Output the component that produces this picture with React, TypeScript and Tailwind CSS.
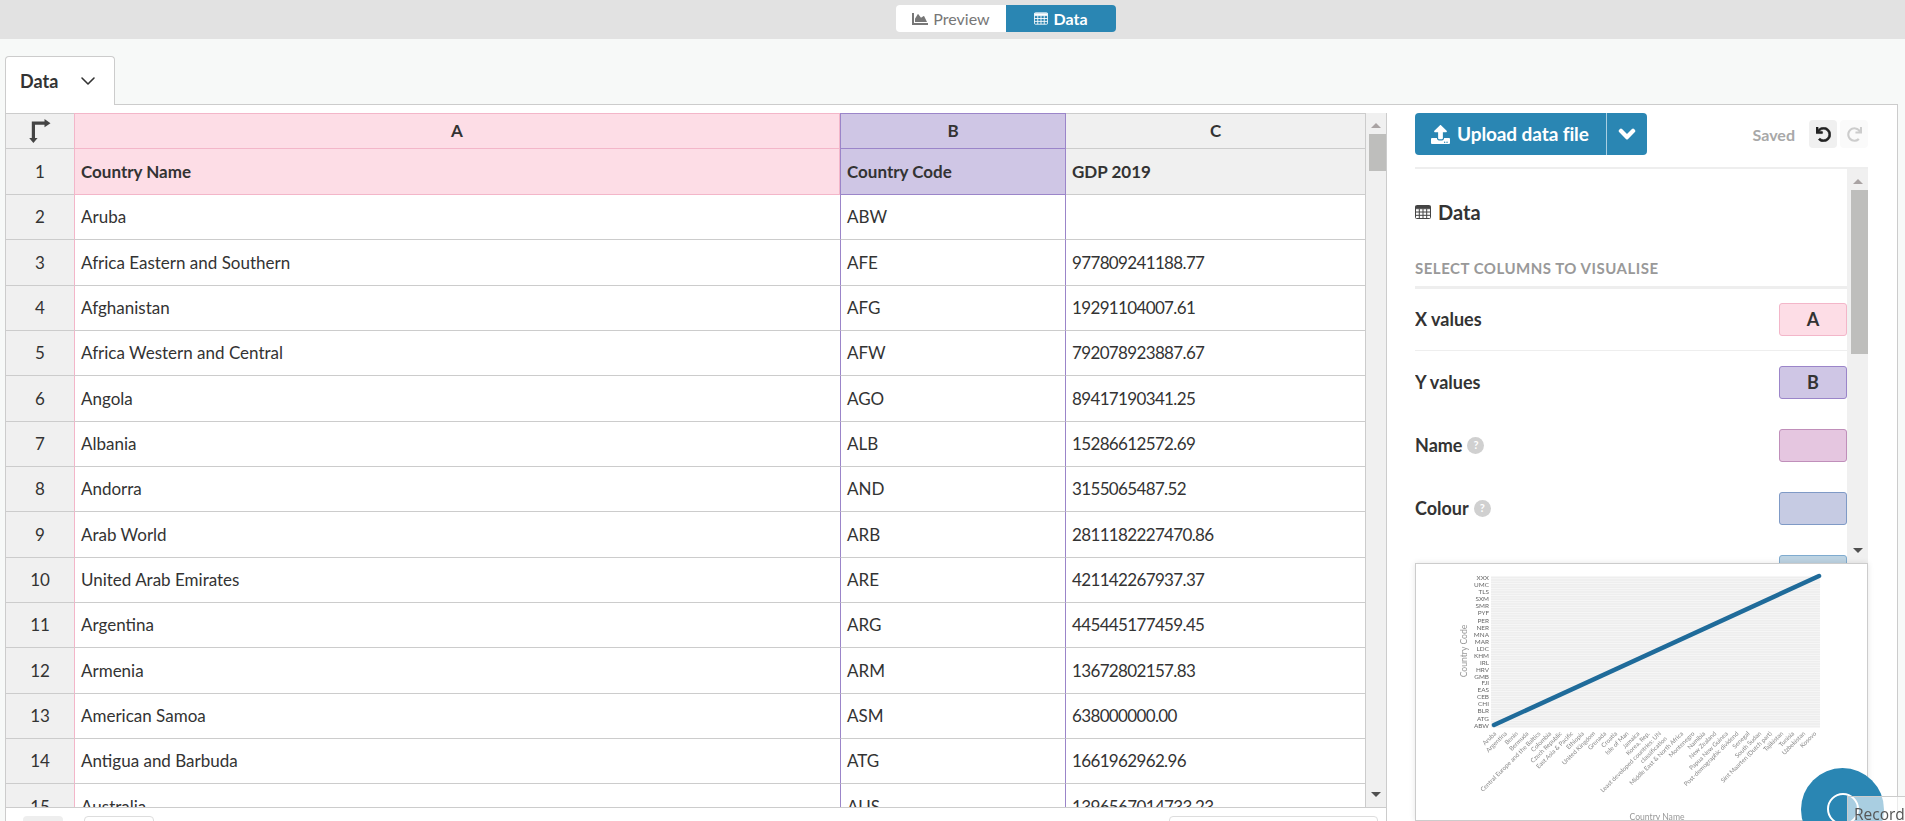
import { FaChartArea, FaChevronDown, FaRedo, FaUndo, FaUpload } from "react-icons/fa";
import { ChevronDown } from "lucide-react";

const rows = [
    ["Aruba", "ABW", ""],
    ["Africa Eastern and Southern", "AFE", "977809241188.77"],
    ["Afghanistan", "AFG", "19291104007.61"],
    ["Africa Western and Central", "AFW", "792078923887.67"],
    ["Angola", "AGO", "89417190341.25"],
    ["Albania", "ALB", "15286612572.69"],
    ["Andorra", "AND", "3155065487.52"],
    ["Arab World", "ARB", "2811182227470.86"],
    ["United Arab Emirates", "ARE", "421142267937.37"],
    ["Argentina", "ARG", "445445177459.45"],
    ["Armenia", "ARM", "13672802157.83"],
    ["American Samoa", "ASM", "638000000.00"],
    ["Antigua and Barbuda", "ATG", "1661962962.96"],
    ["Australia", "AUS", "1396567014733.23"],
];

const yLabels: [string, number][] = [
    ["XXX", 53], ["UMC", 74], ["TLS", 95], ["SXM", 117], ["SMR", 137], ["PYF", 158],
    ["PER", 182], ["NER", 203], ["MNA", 224], ["MAR", 245], ["LDC", 266], ["KHM", 287],
    ["IRL", 308], ["HRV", 329], ["GMB", 350], ["FJI", 369], ["EAS", 389], ["CEB", 410],
    ["CHI", 431], ["BLR", 452], ["ATG", 476], ["ABW", 497],
];

const xLabels: [string, number, number?][] = [
    ["Aruba", 290], ["Argentina", 322], ["Benin", 355], ["Bermuda", 387],
    ["Central Europe and the Baltics", 423], ["Colombia", 455], ["Czech Republic", 487],
    ["East Asia & Pacific", 521], ["Ethiopia", 553], ["United Kingdom", 587], ["Grenada", 620],
    ["Croatia", 653], ["Isle of Man", 687], ["Jamaica", 720], ["Korea, Rep.", 751],
    ["Least developed countries: UN", 785], ["classification", 802, 5],
    ["Middle East & North Africa", 851], ["Montenegro", 885], ["Namibia", 917],
    ["New Zealand", 950], ["Papua New Guinea", 985], ["Post-demographic dividend", 1017],
    ["Senegal", 1050], ["South Sudan", 1085], ["Sint Maarten (Dutch part)", 1117],
    ["Tajikistan", 1151], ["Tunisia", 1184], ["Uzbekistan", 1217], ["Kosovo", 1250],
];

function TableIcon({ className }: { className?: string }) {
    return (
        <svg viewBox="0 0 16 14" className={className} fill="none" stroke="currentColor" strokeWidth="1">
            <rect x="0.5" y="0.5" width="15" height="13" rx="1" />
            <path d="M0.5 3.7H15.5M0.5 7H15.5M0.5 10.3H15.5M4.3 3.7V13.5M8 3.7V13.5M11.7 3.7V13.5" />
            <path d="M0.5 2.1H15.5" strokeWidth="2.4" />
        </svg>
    );
}

function SwapIcon() {
    return (
        <svg viewBox="0 0 22 24" className="w-[22px] h-[24px] text-[#444]" fill="currentColor">
            <path d="M2.8 19V2.6H15.5V0L21.5 4.2 15.5 8.2V5.8H6V19H8.6L4.4 24 0.2 19Z" />
        </svg>
    );
}

function Scrollbar({ thumbHeight, className }: { thumbHeight: string; className: string }) {
    return (
        <div className={`flex flex-col items-end bg-[#f0f0f0] overflow-hidden ${className}`}>
            <div className="h-[21px] w-full flex justify-center items-center pt-[3px]">
                <div className="w-0 h-0 border-x-[5px] border-x-transparent border-b-[5px] border-b-[#a9a3a3]" />
            </div>
            <div className={`w-[17px] bg-[#bebebc] ${thumbHeight}`} />
            <div className="flex-1" />
            <div className="h-[20px] w-full flex justify-center items-start pt-[5px]">
                <div className="w-0 h-0 border-x-[5px] border-x-transparent border-t-[5px] border-t-[#505050]" />
            </div>
        </div>
    );
}

function DataTable() {
    const base = "flex items-center px-[6px] border-b border-[#ccc] truncate";
    return (
        <div className="flex-1 grid grid-cols-[68px_766px_226px_300px] content-start text-[#333] text-[17px] overflow-hidden">
            <div className="h-[36px] flex items-center justify-center bg-[#f0f0f0] border-y border-[#ccc]">
                <SwapIcon />
            </div>
            <div className="h-[36px] flex items-center justify-center bg-[#fddde6] border border-[#f3b6c9] font-bold">A</div>
            <div className="h-[36px] flex items-center justify-center bg-[#cfc6e5] border border-[#9b85c9] font-bold">B</div>
            <div className="h-[36px] flex items-center justify-center bg-[#f0f0f0] border-y border-r border-[#ccc] font-bold">C</div>

            <div className="h-[46px] flex items-center justify-center bg-[#f0f0f0] border-b border-[#ccc]">1</div>
            <div className="h-[46px] flex items-center px-[6px] bg-[#fddde6] border-x border-b border-[#f3b6c9] font-bold">Country Name</div>
            <div className="h-[46px] flex items-center px-[6px] bg-[#cfc6e5] border-x border-b border-[#9b85c9] font-bold">Country Code</div>
            <div className="h-[46px] flex items-center px-[6px] bg-[#f0f0f0] border-r border-b border-[#ccc] font-bold">GDP 2019</div>

            {rows.map((row, i) => (
                <div key={row[1]} className="contents">
                    <div className="h-[45.33px] flex items-center justify-center bg-[#f0f0f0] border-b border-[#ccc]">{i + 2}</div>
                    <div className={`h-[45.33px] border-l border-l-[#f3b6c9] ${base}`}>{row[0]}</div>
                    <div className={`h-[45.33px] border-x border-x-[#9b85c9] ${base}`}>{row[1]}</div>
                    <div className={`h-[45.33px] border-r tracking-[-0.65px] ${base}`}>{row[2]}</div>
                </div>
            ))}
        </div>
    );
}

function ColumnRow({ label, help, letter, box, height }: { label: string; help?: boolean; letter?: string; box: string; height: string }) {
    return (
        <div className={`flex items-center justify-between ${height}`}>
            <div className="flex items-center gap-[5px] text-[18px] font-bold text-[#333]">
                {label}
                {help && (
                    <span className="w-[17px] h-[17px] rounded-full bg-[#d0d0d0] text-white text-[11px] flex items-center justify-center">?</span>
                )}
            </div>
            <div className={`w-[68px] h-[33px] rounded-[3px] border flex items-center justify-center text-[18px] font-bold text-[#333] ${box}`}>
                {letter}
            </div>
        </div>
    );
}

function Chart() {
    return (
        <svg viewBox="0 0 451 257" className="w-[451px] h-[257px] font-['Lato',sans-serif] blur-[0.3px]">
            <defs>
                <pattern id="stripes" width="4" height="2.4" patternUnits="userSpaceOnUse">
                    <rect width="4" height="2.4" fill="#eeeeee" />
                    <rect width="4" height="0.6" fill="#fafafa" />
                </pattern>
            </defs>
            <rect x="75" y="12" width="329" height="152" fill="url(#stripes)" />
            <line x1="78" y1="161" x2="403" y2="12" stroke="#1f6b9a" strokeWidth="4.5" strokeLinecap="round" />
            {yLabels.map(([t, y]) => (
                <text key={t} x="73" y={y / 3 - 2} textAnchor="end" fontSize="6.4" fill="#666">{t}</text>
            ))}
            <text transform="translate(51 87) rotate(-90)" textAnchor="middle" fontSize="8.6" fill="#999">Country Code</text>
            {xLabels.map(([t, x, dy]) => (
                <text key={t} transform={`translate(${x / 3 - 16} ${170 + (dy ?? 0)}) rotate(-45)`} textAnchor="end" fontSize="6.2" fill="#888">{t}</text>
            ))}
            <text x="241" y="256" textAnchor="middle" fontSize="8.6" fill="#999">Country Name</text>
        </svg>
    );
}

export default function App() {
    return (
        <div className="h-screen overflow-hidden flex flex-col bg-[#f7f9f8] font-['Lato','Noto_Sans',sans-serif] text-[#333]">
            {/* top bar */}
            <div className="h-[39px] shrink-0 bg-[#e2e2e2] flex justify-center pt-[5px] pl-[107px]">
                <div className="flex h-[27px] rounded-[4px] overflow-hidden text-[16px]">
                    <button className="w-[110px] bg-white text-[#777] flex items-center justify-center gap-[5px]">
                        <FaChartArea size={16} />
                        Preview
                    </button>
                    <button className="w-[110px] bg-[#2a86b3] text-white font-bold flex items-center justify-center gap-[5px]">
                        <TableIcon className="w-[14px] h-[13px]" />
                        Data
                    </button>
                </div>
            </div>

            {/* tabs */}
            <div className="h-[65px] shrink-0 pt-[17px] pl-[5px]">
                <div className="relative z-10 w-[110px] h-[49px] bg-white border border-b-0 border-[#ccc] rounded-t-[4px] flex items-center pl-[14px] gap-[18px] text-[18px] font-bold">
                    Data
                    <ChevronDown size={24} strokeWidth={1.6} className="text-[#333]" />
                </div>
            </div>

            {/* panel */}
            <div className="flex-1 min-h-0 ml-[5px] mr-[7px] bg-white border border-[#ccc] border-b-0 flex">
                <div className="w-[1381px] shrink-0 flex flex-col border-r border-[#ccc] mt-[8px]">
                    <div className="h-[695px] shrink-0 flex border-b border-[#ccc]">
                        <DataTable />
                        <Scrollbar className="w-[20px]" thumbHeight="h-[37px]" />
                    </div>
                    <div className="flex items-start pt-[8px] pl-[17px] pr-[8px]">
                        <div className="w-[40px] h-[30px] bg-[#eee] rounded-[4px]" />
                        <div className="w-[70px] h-[30px] ml-[21px] bg-white border border-[#ddd] rounded-[4px]" />
                        <div className="w-[209px] h-[30px] ml-auto bg-white border border-[#ddd] rounded-[4px]" />
                    </div>
                </div>

                {/* right column */}
                <div className="w-[453px] ml-[28px] shrink-0 flex flex-col mt-[8px]">
                    <div className="h-[56px] shrink-0 flex items-start border-b-2 border-[#eee]">
                        <div className="flex h-[42px] bg-[#2a86b3] rounded-[4px] text-white font-bold text-[19px] tracking-[-0.1px]">
                            <div className="w-[192px] flex items-center pl-[16px] gap-[7px] border-r border-[#a9cfe2]">
                                <FaUpload size={19} />
                                Upload data file
                            </div>
                            <div className="w-[40px] flex items-center justify-center">
                                <FaChevronDown size={18} stroke="currentColor" strokeWidth={40} />
                            </div>
                        </div>
                        <span className="ml-auto mt-[10px] text-[#a8a8a8] font-bold text-[16px]">Saved</span>
                        <div className="ml-[14px] mt-[7px] w-[28px] h-[28px] rounded-[4px] bg-[#f0f0f0] flex items-center justify-center text-[#222]">
                            <FaUndo size={15} stroke="currentColor" strokeWidth={20} />
                        </div>
                        <div className="ml-[3px] mt-[7px] w-[28px] h-[28px] rounded-[4px] bg-[#fafafa] flex items-center justify-center text-[#ccc]">
                            <FaRedo size={15} />
                        </div>
                    </div>

                    <div className="h-[394px] shrink-0 flex overflow-hidden">
                        <div className="w-[432px] shrink-0">
                            <div className="h-[26px] mt-[30px] flex items-center gap-[7px] text-[20px] font-bold text-[#333]">
                                <TableIcon className="w-[16px] h-[14px] text-[#444]" />
                                Data
                            </div>
                            <div className="mt-[33px] leading-[20px] pb-[8px] border-b-[3px] border-[#eee] text-[15px] font-bold tracking-[0.5px] text-[#999]">
                                SELECT COLUMNS TO VISUALISE
                            </div>
                            <div className="border-b border-[#eee]">
                                <ColumnRow label="X values" letter="A" box="bg-[#fddde6] border-[#f3b6c9]" height="h-[61px]" />
                            </div>
                            <ColumnRow label="Y values" letter="B" box="bg-[#cfc6e5] border-[#9b85c9]" height="h-[63px]" />
                            <ColumnRow label="Name" help box="bg-[#e5c6e0] border-[#c08fba]" height="h-[63px]" />
                            <ColumnRow label="Colour" help box="bg-[#c6cbe3] border-[#7f9ac6]" height="h-[63px]" />
                            <ColumnRow label="" box="bg-[#bdd3e2] border-[#7fabcf]" height="h-[63px]" />
                        </div>
                        <Scrollbar className="w-[21px]" thumbHeight="h-[164px]" />
                    </div>

                    <div className="flex-1 min-h-0 border border-[#ccc] shadow-[0_0_6px_rgba(0,0,0,0.1)] bg-white overflow-hidden">
                        <Chart />
                    </div>
                </div>
            </div>

            {/* record widget */}
            <div className="fixed left-[1801px] top-[768px] w-[83px] h-[83px] rounded-full bg-[#2a86b3] flex items-center justify-center">
                <div className="w-[32px] h-[32px] rounded-full border-2 border-white mb-[1px]" />
            </div>
            <div className="fixed left-[1847px] top-[796px] w-[58px] h-[25px] bg-white/60 border-t border-l border-[#ccc] pl-[6px] text-[15.5px] leading-[34px] font-['Open_Sans',sans-serif] text-[#555] overflow-hidden">
                Record
            </div>
        </div>
    );
}
